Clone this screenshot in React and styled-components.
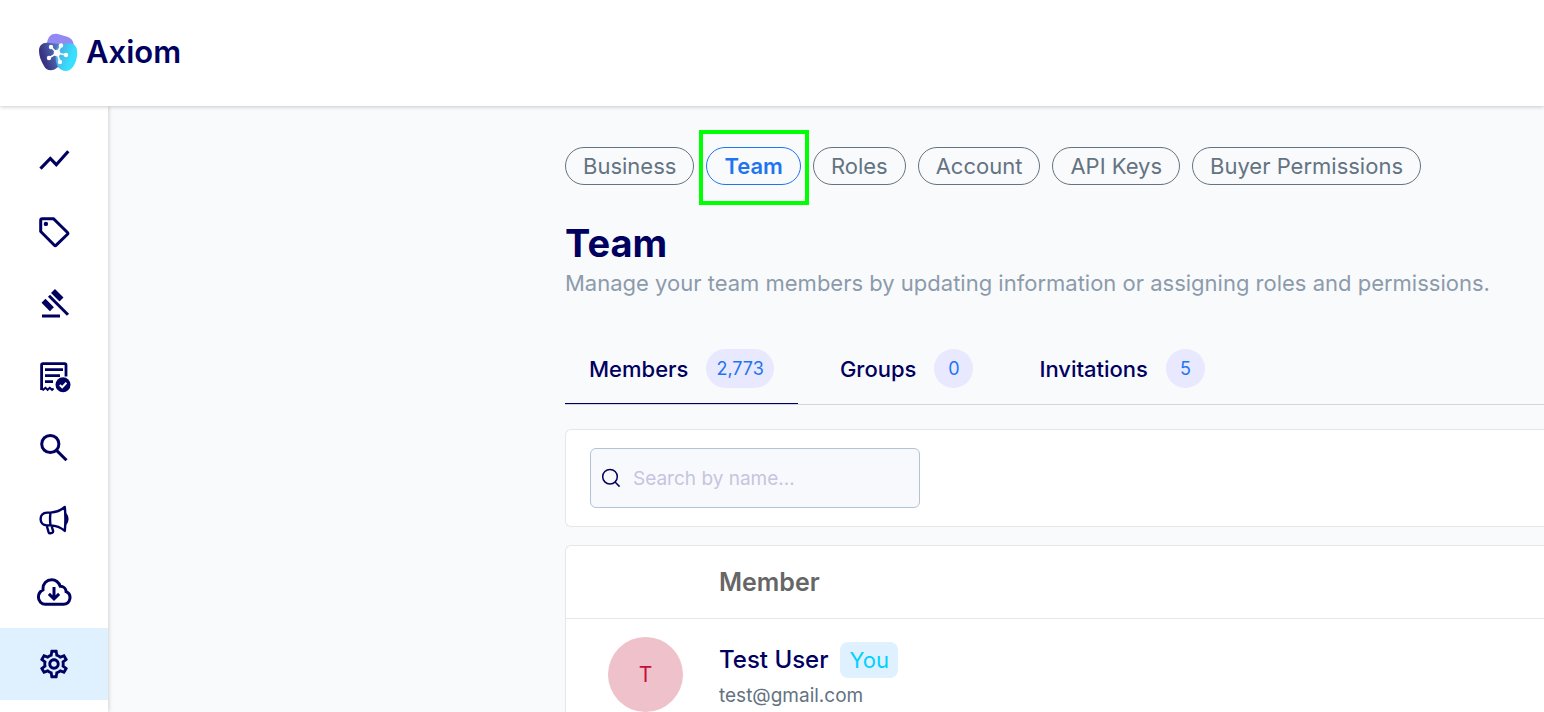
import React, { useState } from "react";
import styled, { createGlobalStyle } from "styled-components";
import { MdOutlineSettings } from "react-icons/md";

const navItems = [
  { label: "Analytics", icon: <path strokeWidth="3.2" d="M4.5 26.7 14.3 16.5 20.3 22.7 32.3 9.3" /> },
  {
    label: "Products",
    icon: (
      <>
        <path d="M6.2 4.7H17.5L31.5 18.5q.9.9 0 1.8L20.2 31.2q-.9.9-1.8 0L4.7 17.5V6.2q0-1.5 1.5-1.5z" />
        <circle cx="9.9" cy="9.9" r="2.2" fill="currentColor" stroke="none" />
      </>
    ),
  },
  {
    label: "Auctions",
    icon: (
      <>
        <path d="M6 30H24M13 9.7 32 28.7" />
        <path strokeWidth="5.6" d="M17 4.9 25.5 13.4M7.5 14.8 15.9 23.2" />
      </>
    ),
  },
  {
    label: "Orders",
    icon: (
      <>
        <path strokeWidth="2.8" d="M5.6 32V7q0-1.4 1.4-1.4H28.6Q30 5.6 30 7V18.5M9 11.7H27M9 17.7H24M9 23.7H17" />
        <path strokeWidth="2" d="M5 30.5l2.2 1.3 2.2-2 2.2 2 2.2-2 2.2 2 1.6-1.4" />
        <circle cx="27" cy="26.7" r="7.5" fill="currentColor" stroke="none" />
        <path stroke="#fff" strokeWidth="2" d="M23.8 27 26.2 29.3 30.4 24.8" />
      </>
    ),
  },
  {
    label: "Search",
    icon: (
      <>
        <circle cx="14.3" cy="14" r="8.6" />
        <path d="M20.8 20.6 30.5 30.3" />
      </>
    ),
  },
  {
    label: "Campaigns",
    icon: (
      <path
        strokeWidth="2.4"
        strokeLinejoin="round"
        d="M14.5 10.6H11C6.7 10.6 4.6 13.6 4.6 17S6.7 23.4 11 23.4H14.5C20 23.6 25 25.6 28.8 28.9Q30 17 28.8 5C25 8.4 20 10.4 14.5 10.6Q13.6 17 14.5 23.4M29.6 12Q31.4 14.5 31.4 17T29.6 22M10.8 24 12.6 30.2Q13.2 31.7 14.8 31.2L16 30.8Q17.5 30.2 17 28.6L15.6 24"
      />
    ),
  },
  {
    label: "Downloads",
    icon: (
      <>
        <path d="M9.5 30.3H27.5a6.6 6.6 0 0 0 2.6-12.6C30 14.5 27.5 12.3 24.2 12.3 22.8 8.3 19.6 5.7 15.7 5.7 10.6 5.7 7 9.4 7 14.6v1.3C4.2 17.3 2.4 19.8 2.4 23 2.4 27.2 5.5 30.3 9.5 30.3z" />
        <path d="M18 13V25M12.9 19.9 18 25 23.1 19.9" />
      </>
    ),
  },
];

const sections = ["Business", "Team", "Roles", "Account", "API Keys", "Buyer Permissions"];

const tabs = [
  { label: "Members", count: "2,773" },
  { label: "Groups", count: "0" },
  { label: "Invitations", count: "5" },
];

const Logo = () => (
  <svg width="40" height="40" viewBox="0 0 40 40" aria-hidden="true">
    <defs>
      <linearGradient id="dark" x1="0" y1="0.7" x2="1" y2="0.3">
        <stop offset="0.2" stopColor="#383381" />
        <stop offset="1" stopColor="#5a86cf" />
      </linearGradient>
      <linearGradient id="cyan" x1="0" y1="0" x2="1" y2="0.5">
        <stop offset="0" stopColor="#529bd7" />
        <stop offset="0.8" stopColor="#38dfff" />
      </linearGradient>
    </defs>
    <path fill="#9489f3" d="M9 11C10 4 14 1 20 2L30 5C35 7 37 12 35 19L12 20Z" />
    <path fill="url(#dark)" d="M1 19C1 13 5 10 11 11L22 12C25 18 26 28 20 35 16 39 9 40 6 34 3 29 1 24 1 19Z" />
    <path fill="url(#cyan)" d="M22 12C28 11 36 10 38 15 41 21 38 32 34 36 30 41 23 39 20 35 17 30 16 16 22 12Z" />
    <path stroke="#fff" strokeWidth="1.7" d="M19 21 13 15M19 21 23 14M19 21 28 23M19 21 22 30M19 21 11 26" />
    <g fill="#fff">
      <circle cx="19" cy="21" r="3.3" />
      <circle cx="13" cy="15" r="2.2" />
      <circle cx="23" cy="13.5" r="2.2" />
      <circle cx="28" cy="23" r="2.2" />
      <circle cx="22" cy="30" r="2.2" />
      <circle cx="11" cy="26" r="2.2" />
    </g>
  </svg>
);

export default () => {
  const [tab, setTab] = useState("Members");

  return (
    <Page>
      <GlobalStyle />
      <Header>
        <Brand href="#">
          <Logo />
          Axiom
        </Brand>
      </Header>
      <Body>
        <Sidebar aria-label="Main">
          {navItems.map(({ label, icon }) => (
            <NavItem key={label} href="#" aria-label={label}>
              <svg width="36" height="36" viewBox="0 0 36 36" fill="none" stroke="currentColor" strokeWidth="3">
                {icon}
              </svg>
            </NavItem>
          ))}
          <NavItem href="#" aria-label="Settings" $active>
            <MdOutlineSettings size={34} />
          </NavItem>
        </Sidebar>
        <Main>
          <Pills aria-label="Settings">
            {sections.map((name) => (
              <PillSlot key={name}>
                <Pill href="#" $active={name === "Team"}>{name}</Pill>
                {name === "Team" && <Highlight />}
              </PillSlot>
            ))}
          </Pills>
          <Title>Team</Title>
          <Subtitle>Manage your team members by updating information or assigning roles and permissions.</Subtitle>
          <Tabs role="tablist">
            {tabs.map(({ label, count }) => (
              <Tab key={label} role="tab" aria-selected={tab === label} $active={tab === label} onClick={() => setTab(label)}>
                {label}
                <Count>{count}</Count>
              </Tab>
            ))}
          </Tabs>
          <Filters>
            <SearchBox>
              <svg width="20" height="20" viewBox="0 0 20 20" fill="none" stroke="#000060" strokeWidth="1.5">
                <circle cx="9" cy="8.7" r="7.3" />
                <path d="M14 14 18.6 18.6" />
              </svg>
              <input type="text" placeholder="Search by name..." aria-label="Search by name" />
            </SearchBox>
          </Filters>
          <Table>
            <thead>
              <tr>
                <AvatarHead />
                <th scope="col">Member</th>
              </tr>
            </thead>
            <tbody>
              <tr>
                <td>
                  <Avatar>T</Avatar>
                </td>
                <td>
                  <Name>
                    Test User <You>You</You>
                  </Name>
                  <Email>test@gmail.com</Email>
                </td>
              </tr>
            </tbody>
          </Table>
        </Main>
      </Body>
    </Page>
  );
};

const GlobalStyle = createGlobalStyle`
  * {
    box-sizing: border-box;
  }
  body {
    margin: 0;
    font-family: Inter, sans-serif;
    color: #000060;
    background: #f9fafc;
  }
`;

const Page = styled.div`
  display: flex;
  flex-direction: column;
  height: 100vh;
  overflow: hidden;
`;

const Header = styled.header`
  display: flex;
  align-items: center;
  flex-shrink: 0;
  padding: 32px 38px 34px;
  background: #fff;
  box-shadow: 0 1px 4px rgba(0, 0, 0, 0.2);
  z-index: 1;
`;

const Brand = styled.a`
  display: flex;
  align-items: center;
  gap: 8px;
  font-size: 31px;
  line-height: 40px;
  font-weight: 600;
  color: #000060;
  text-decoration: none;
`;

const Body = styled.div`
  display: flex;
  flex: 1;
  min-height: 0;
`;

const Sidebar = styled.nav`
  flex: 0 0 108px;
  padding-top: 18px;
  background: #fff;
  box-shadow: 1px 0 4px rgba(0, 0, 0, 0.16);
`;

const NavItem = styled.a`
  display: flex;
  align-items: center;
  justify-content: center;
  height: 72px;
  color: #000060;
  background: ${(p) => (p.$active ? "#dff1ff" : "transparent")};
`;

const Main = styled.main`
  flex: 1;
  min-width: 0;
  padding: 41px 0 0 457px;
  overflow: hidden;
`;

const Pills = styled.nav`
  display: flex;
  gap: 12px;
`;

const PillSlot = styled.div`
  position: relative;
`;

const Pill = styled.a`
  display: block;
  padding: 0 17px;
  border: 1px solid;
  border-radius: 19px;
  font-size: 22px;
  line-height: 36px;
  font-weight: ${(p) => (p.$active ? 600 : 400)};
  color: ${(p) => (p.$active ? "#1f75f0" : "#637381")};
  text-decoration: none;
  white-space: nowrap;
`;

const Highlight = styled.span`
  position: absolute;
  inset: -17px -8px -20px -7px;
  border: 4px solid #00ff00;
  pointer-events: none;
`;

const Title = styled.h1`
  margin: 34px 0 0;
  font-size: 38px;
  line-height: 48px;
  font-weight: 700;
`;

const Subtitle = styled.p`
  margin: 0;
  font-size: 22px;
  line-height: 32px;
  color: #8c9bab;
  white-space: nowrap;
`;

const Tabs = styled.div`
  display: flex;
  gap: 18px;
  margin-top: 34px;
  border-bottom: 1px solid #d0d4dc;
`;

const Tab = styled.button`
  display: flex;
  align-items: center;
  gap: 18px;
  padding: 16px 24px 15px;
  border: 0;
  border-bottom: 1px solid ${(p) => (p.$active ? "#000060" : "transparent")};
  background: none;
  font: inherit;
  font-size: 22px;
  font-weight: 500;
  color: #000060;
  cursor: pointer;
`;

const Count = styled.span`
  min-width: 39px;
  padding: 0 10px;
  border-radius: 20px;
  background: #e8e8ff;
  color: #1f75f0;
  font-size: 18px;
  line-height: 39px;
  font-weight: 400;
  text-align: center;
`;

const Filters = styled.section`
  margin: 24px 0 18px;
  padding: 18px 24px;
  background: #fff;
  border: 1px solid #e5e7eb;
  border-right: 0;
  border-radius: 6px 0 0 6px;
`;

const SearchBox = styled.label`
  display: flex;
  align-items: center;
  gap: 12px;
  width: 330px;
  height: 60px;
  padding: 0 10px;
  background: #f8f9fd;
  border: 1px solid #b2c3d6;
  border-radius: 6px;
  input {
    flex: 1;
    min-width: 0;
    padding: 0;
    border: 0;
    outline: 0;
    background: none;
    font: inherit;
    font-size: 19px;
    color: #000060;
  }
  input::placeholder {
    color: #c6c4de;
  }
`;

const Table = styled.table`
  width: 100%;
  background: #fff;
  border: 1px solid #e5e7eb;
  border-right: 0;
  border-radius: 6px 0 0 6px;
  border-spacing: 0;
  text-align: left;
  th {
    padding: 18px 0;
    border-bottom: 1px solid #e5e7eb;
    font-size: 25px;
    line-height: 36px;
    font-weight: 600;
    color: #666;
  }
  td {
    padding: 18px 0;
    vertical-align: top;
  }
  td:first-child {
    padding-left: 42px;
  }
`;

const AvatarHead = styled.td`
  width: 153px;
  border-bottom: 1px solid #e5e7eb;
`;

const Avatar = styled.div`
  width: 75px;
  border-radius: 50%;
  background: #efc1ca;
  color: #c40f3c;
  font-size: 21px;
  line-height: 75px;
  text-align: center;
`;

const Name = styled.div`
  display: flex;
  align-items: center;
  gap: 12px;
  padding-top: 5px;
  font-size: 24px;
  line-height: 36px;
  font-weight: 500;
`;

const You = styled.span`
  padding: 0 9px;
  border-radius: 8px;
  background: #dff1ff;
  color: #00d0ff;
  font-size: 22px;
  font-weight: 400;
`;

const Email = styled.div`
  margin-top: 4px;
  font-size: 19px;
  line-height: 28px;
  color: #637381;
`;
